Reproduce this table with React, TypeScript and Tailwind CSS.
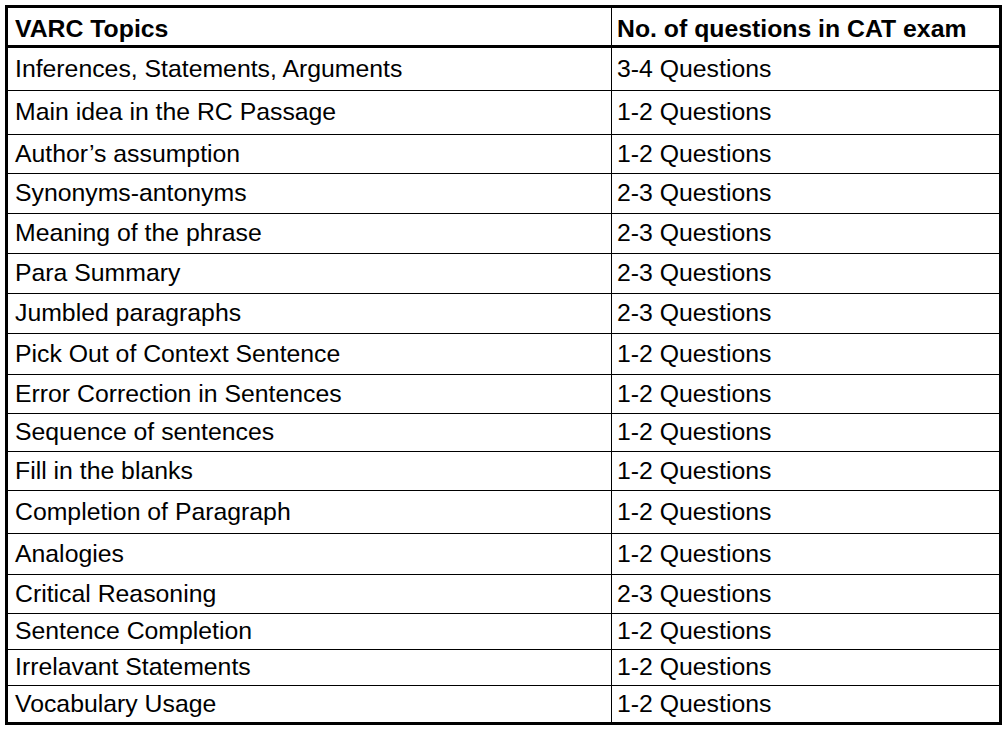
const rows: { topic: string; count: string; h: string }[] = [
  { topic: "Inferences, Statements, Arguments", count: "3-4 Questions", h: "h-[42px]" },
  { topic: "Main idea in the RC Passage", count: "1-2 Questions", h: "h-[44px]" },
  { topic: "Author’s assumption", count: "1-2 Questions", h: "h-[39px]" },
  { topic: "Synonyms-antonyms", count: "2-3 Questions", h: "h-[40px]" },
  { topic: "Meaning of the phrase", count: "2-3 Questions", h: "h-[40px]" },
  { topic: "Para Summary", count: "2-3 Questions", h: "h-[40px]" },
  { topic: "Jumbled paragraphs", count: "2-3 Questions", h: "h-[40px]" },
  { topic: "Pick Out of Context Sentence", count: "1-2 Questions", h: "h-[41px]" },
  { topic: "Error Correction in Sentences", count: "1-2 Questions", h: "h-[39px]" },
  { topic: "Sequence of sentences", count: "1-2 Questions", h: "h-[38px]" },
  { topic: "Fill in the blanks", count: "1-2 Questions", h: "h-[39px]" },
  { topic: "Completion of Paragraph", count: "1-2 Questions", h: "h-[43px]" },
  { topic: "Analogies", count: "1-2 Questions", h: "h-[41px]" },
  { topic: "Critical Reasoning", count: "2-3 Questions", h: "h-[39px]" },
  { topic: "Sentence Completion", count: "1-2 Questions", h: "h-[36px]" },
  { topic: "Irrelavant Statements", count: "1-2 Questions", h: "h-[36px]" },
  { topic: "Vocabulary Usage", count: "1-2 Questions", h: "h-[37px]" },
];

export default function App() {
  return (
    <div className="w-[1005px] h-[729px] bg-white pt-[5px] pl-[5px] font-['Liberation_Sans',Arial,sans-serif] text-[24.8px] leading-none text-black">
      <div className="w-[997px] border-[3px] border-black">
        {/* header */}
        <div className="flex h-[40px] border-b-[3px] border-black font-bold">
          <div className="w-[603px] flex items-center pl-[7px] pt-[5px]">VARC Topics</div>
          <div className="flex-1 flex items-center pl-[5px] pt-[5px] border-l border-black">
            No. of questions in CAT exam
          </div>
        </div>
        {rows.map((r, i) => (
          <div
            key={i}
            className={`flex ${r.h} ${i > 0 ? "border-t border-black" : ""}`}
          >
            <div className="w-[603px] flex items-center pl-[7px]">{r.topic}</div>
            <div className="flex-1 flex items-center pl-[5px] border-l border-black">
              {r.count}
            </div>
          </div>
        ))}
      </div>
    </div>
  );
}
